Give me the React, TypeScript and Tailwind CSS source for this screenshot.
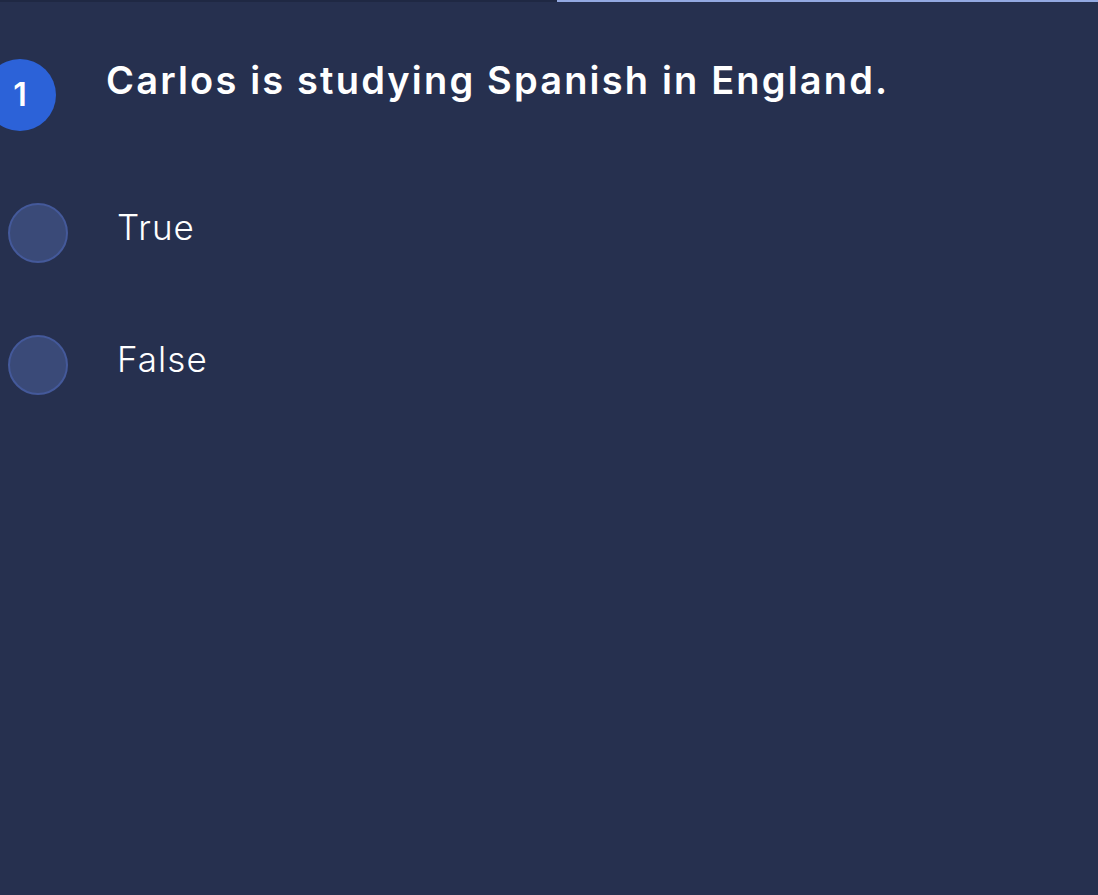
import React from "react";

const options = ["True", "False"];

export default function App() {
  return (
    <div
      className="w-[1098px] h-[895px] overflow-hidden bg-[#26304f] text-white"
      style={{ fontFamily: "Inter, 'Noto Sans', sans-serif" }}
    >
      {/* progress bar */}
      <div className="flex h-[2px]">
        <div className="w-[557px] bg-[#1f2843]" />
        <div className="flex-1 bg-[#93a9e2]" />
      </div>

      {/* question */}
      <div className="flex items-start">
        <div className="ml-[-16px] mt-[57px] flex h-[72px] w-[72px] shrink-0 items-center justify-center rounded-full bg-[#2c62d8] text-[32px] font-semibold">
          1
        </div>
        <h1 className="ml-[50px] mt-[52px] text-[38px] font-semibold leading-[52px] tracking-[0.057em]">
          Carlos is studying Spanish in England.
        </h1>
      </div>

      {/* options */}
      <div className="mt-[72px] flex flex-col gap-[72px] pl-[8px]">
        {options.map((opt) => (
          <label key={opt} className="flex h-[60px] cursor-pointer items-center">
            <span className="h-[60px] w-[60px] shrink-0 rounded-full border-2 border-[#44599a] bg-[#3a4a78]" />
            <span className="ml-[49px] mt-[-12px] text-[35px] font-light tracking-[0.03em]">
              {opt}
            </span>
          </label>
        ))}
      </div>
    </div>
  );
}
